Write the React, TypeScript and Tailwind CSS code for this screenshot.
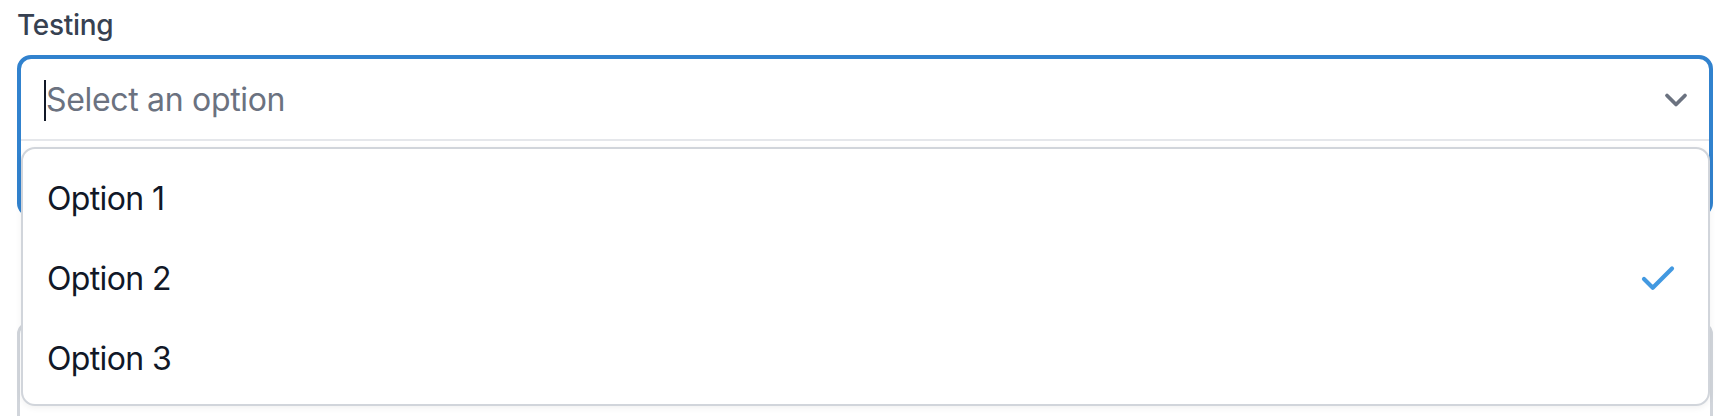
import { ChevronDown, Check } from 'lucide-react'

const options = ['Option 1', 'Option 2', 'Option 3']

const App = () => {
  const selected = 'Option 2'

  return (
    <div className="h-[416px] w-full overflow-hidden bg-white pl-[17px] pr-[21px] font-['Inter',sans-serif]">
      <div className="pt-[5px] text-[28px] leading-[40px] font-medium tracking-[-0.01em] text-[#374151]">Testing</div>

      <div className="relative mt-[10px] h-[162px] rounded-[14px] border-4 border-[#3182ce]">
        <div className="flex h-[80px] items-center pl-[23px] pr-[15px] pt-[2px]">
          <span className="h-[41px] w-[2px] bg-[#111827]" />
          <span className="flex-1 text-[32px] tracking-[-0.01em] text-[#6b7280]">Select an option</span>
          <ChevronDown className="h-[36px] w-[36px] text-[#6b7280]" strokeWidth={2.5} />
        </div>
        <div className="h-[2px] bg-[#e5e7eb]" />

        <div className="absolute left-0 right-[-1px] top-[88px] z-10 rounded-[14px] border-2 border-[#d1d5db] bg-white pt-[10px] pb-[5px] shadow-[0_2px_6px_rgba(0,0,0,.06)]">
          {options.map((opt) => (
            <div key={opt} className="flex h-[80px] items-center justify-between pl-[24px] pr-[29px] text-[32px] tracking-[-0.02em] text-[#111827]">
              <span>{opt}</span>
              {opt === selected && <Check className="h-[42px] w-[42px] text-[#4299e1]" strokeWidth={2.4} />}
            </div>
          ))}
        </div>
      </div>

      <div className="mt-[105px] h-[120px] rounded-[12px] border-[3px] border-[#d1d5db]" />
    </div>
  )
}

export default App
